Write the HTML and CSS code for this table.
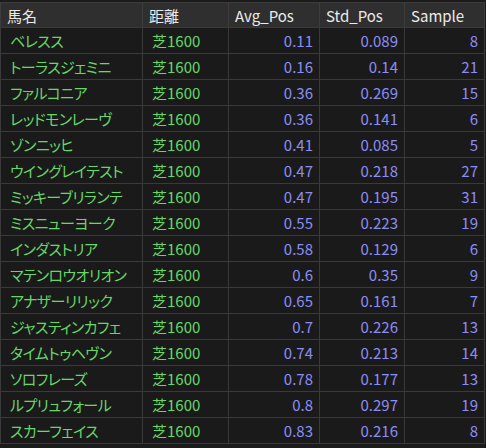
FILE: index.html
```html
<!DOCTYPE html>
<html lang="ja">
<head>
<meta charset="utf-8">
<link rel="stylesheet" href="styles.css">
</head>
<body>
<table class="grid">
<colgroup><col class="c1"><col class="c2"><col class="c3"><col class="c4"><col class="c5"></colgroup>
<thead>
<tr><th>馬名</th><th>距離</th><th>Avg_Pos</th><th>Std_Pos</th><th>Sample</th></tr>
</thead>
<tbody>
<tr><td class="name">ベレスス</td><td class="dist">芝1600</td><td class="num">0.11</td><td class="num">0.089</td><td class="num">8</td></tr>
<tr><td class="name">トーラスジェミニ</td><td class="dist">芝1600</td><td class="num">0.16</td><td class="num">0.14</td><td class="num">21</td></tr>
<tr><td class="name">ファルコニア</td><td class="dist">芝1600</td><td class="num">0.36</td><td class="num">0.269</td><td class="num">15</td></tr>
<tr><td class="name">レッドモンレーヴ</td><td class="dist">芝1600</td><td class="num">0.36</td><td class="num">0.141</td><td class="num">6</td></tr>
<tr><td class="name">ゾンニッヒ</td><td class="dist">芝1600</td><td class="num">0.41</td><td class="num">0.085</td><td class="num">5</td></tr>
<tr><td class="name">ウイングレイテスト</td><td class="dist">芝1600</td><td class="num">0.47</td><td class="num">0.218</td><td class="num">27</td></tr>
<tr><td class="name">ミッキーブリランテ</td><td class="dist">芝1600</td><td class="num">0.47</td><td class="num">0.195</td><td class="num">31</td></tr>
<tr><td class="name">ミスニューヨーク</td><td class="dist">芝1600</td><td class="num">0.55</td><td class="num">0.223</td><td class="num">19</td></tr>
<tr><td class="name">インダストリア</td><td class="dist">芝1600</td><td class="num">0.58</td><td class="num">0.129</td><td class="num">6</td></tr>
<tr><td class="name">マテンロウオリオン</td><td class="dist">芝1600</td><td class="num">0.6</td><td class="num">0.35</td><td class="num">9</td></tr>
<tr><td class="name">アナザーリリック</td><td class="dist">芝1600</td><td class="num">0.65</td><td class="num">0.161</td><td class="num">7</td></tr>
<tr><td class="name">ジャスティンカフェ</td><td class="dist">芝1600</td><td class="num">0.7</td><td class="num">0.226</td><td class="num">13</td></tr>
<tr><td class="name">タイムトゥヘヴン</td><td class="dist">芝1600</td><td class="num">0.74</td><td class="num">0.213</td><td class="num">14</td></tr>
<tr><td class="name">ソロフレーズ</td><td class="dist">芝1600</td><td class="num">0.78</td><td class="num">0.177</td><td class="num">13</td></tr>
<tr><td class="name">ルプリュフォール</td><td class="dist">芝1600</td><td class="num">0.8</td><td class="num">0.297</td><td class="num">19</td></tr>
<tr><td class="name">スカーフェイス</td><td class="dist">芝1600</td><td class="num">0.83</td><td class="num">0.216</td><td class="num">8</td></tr>
</tbody>
</table>
</body>
</html>
```
FILE: styles.css
```css
html, body {
  margin: 0;
  padding: 0;
  background: #1b1b1b;
}
body {
  padding-top: 2px;
  font-family: "Noto Sans CJK JP", "Noto Sans", sans-serif;
  font-size: 15px;
  font-feature-settings: "palt";
}
.grid {
  border-collapse: collapse;
  table-layout: fixed;
  width: 484px;
  background: #1a1a1a;
}
.c1 { width: 142px; }
.c2 { width: 86px; }
.c3 { width: 91px; }
.c4 { width: 85px; }
.c5 { width: 80px; }
.grid th, .grid td {
  border: 1px solid #3a3a3a;
  padding: 0 6px;
  white-space: nowrap;
  overflow: hidden;
  line-height: 1;
}
.grid th {
  height: 24px;
  background: #2f2f2f;
  color: #ececec;
  font-weight: normal;
  text-align: left;
  border-color: #3c3c3c;
}
.grid td {
  height: 25px;
}
.grid td.name, .grid td.dist {
  color: #66d866;
  padding-left: 9px;
}
.grid td.name {
  letter-spacing: -0.6px;
}
.grid td.num {
  color: #8c8ef6;
  text-align: right;
}
```
